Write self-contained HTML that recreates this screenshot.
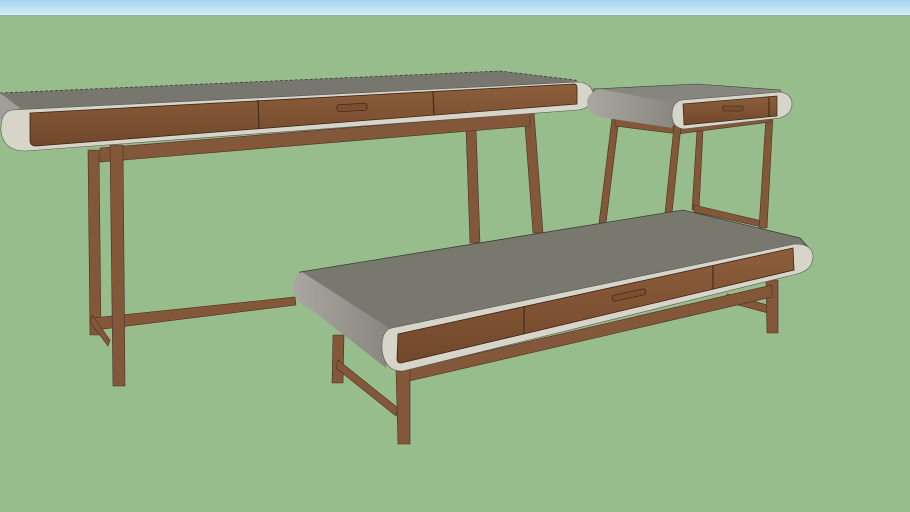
<!DOCTYPE html>
<html><head><style>html,body{margin:0;padding:0;width:910px;height:512px;overflow:hidden;background:#98bd8c}</style></head>
<body>
<svg width="910" height="512" viewBox="0 0 910 512" xmlns="http://www.w3.org/2000/svg">
<defs>
<linearGradient id="sky" x1="0" y1="0" x2="0" y2="1"><stop offset="0" stop-color="#a6d4ee"/><stop offset="1" stop-color="#d4ecf6"/></linearGradient>
<linearGradient id="wood" x1="0" y1="0" x2="0" y2="1"><stop offset="0" stop-color="#8c5e3c"/><stop offset=".5" stop-color="#7f5333"/><stop offset="1" stop-color="#72482b"/></linearGradient>
<linearGradient id="cap" x1="0" y1="0" x2="1" y2="0"><stop offset="0" stop-color="#a9a79f"/><stop offset="1" stop-color="#86857e"/></linearGradient>
</defs>
<rect x="0" y="0" width="910" height="15" fill="url(#sky)"/>
<rect x="0" y="15" width="910" height="1" fill="#8fb5a0"/>
<g stroke="#4a3020" stroke-width=".6" fill="#82573a">
<polygon points="88,150 99,150 101,335 90,335"/>
<polygon points="466,128 476,128 480,243 470,243"/>
<polygon points="524,112 534,112 543,233 533,233"/>
<polygon points="92,318 295,297 296,305 95,330"/>
<polygon points="92,315 110,340 108,346 90,322"/>
<polygon points="100,148 530,113 530,126 100,162"/>
<polygon points="110,145 123,145 125,386 113,386"/>
<polygon points="612,118 619,118 606,223 599,223"/>
<polygon points="697,130 703,130 699,210 692,210"/>
<polygon points="694,205 762,221 762,227 694,212"/>
<polygon points="766,116 773,116 767,228 759,228"/>
<polygon points="615,118 770,114 770,122 678,134 615,126"/>
<polygon points="674,126 681,126 672,213 665,213"/>
</g>
<polygon points="0,93 500,71 575,80 590,90 20,118 0,110" fill="#78776f" stroke="#3d3d38" stroke-width=".8" stroke-dasharray="3,2"/>
<path d="M0,93 L20,108 L10,118 L0,120Z" fill="#a09e96"/>
<path d="M12,110 L578,82 Q593,83 593,96 Q593,108 578,110 L25,151 Q4,151 1,132 Q0,112 12,110Z" fill="#d7d5ca" stroke="#555" stroke-width=".6"/>
<path d="M30,113 L574,84 Q577,84 577,88 L577,104 L36,146 Q30,146 30,140Z" fill="url(#wood)" stroke="#3a2515" stroke-width=".8"/>
<line x1="258" y1="100" x2="259" y2="128" stroke="#3a2515"/>
<line x1="433" y1="92" x2="434" y2="115" stroke="#3a2515"/>
<rect x="337" y="104" width="30" height="7" rx="2" fill="#7a4e2f" stroke="#3a2515" stroke-width=".7" transform="rotate(-3 352 108)"/>
<polygon points="593,89 697,84 780,90 785,98 680,104 600,116" fill="#86857e" stroke="#3d3d38" stroke-width=".6"/>
<path d="M600,89 Q588,92 587,102 Q588,114 600,117 L672,128 L680,104Z" fill="url(#cap)"/>
<path d="M682,100 L780,92 Q792,94 792,104 Q792,114 780,118 L684,129 Q672,128 672,115 Q672,102 682,100Z" fill="#d7d5ca" stroke="#555" stroke-width=".6"/>
<path d="M683,104 L777,96 L777,116 L684,125Z" fill="url(#wood)" stroke="#3a2515" stroke-width=".7"/>
<line x1="769" y1="97" x2="769" y2="117" stroke="#3a2515"/>
<rect x="723" y="106" width="20" height="5" rx="1.5" fill="#7a4e2f" stroke="#3a2515" stroke-width=".6"/>
<g stroke="#4a3020" stroke-width=".6" fill="#82573a">
<polygon points="333,335 344,335 343,383 332,383"/>
<polygon points="338,360 398,408 396,416 336,368"/>
<polygon points="727,294 768,305 768,313 727,302"/>
<polygon points="766,280 778,280 778,333 767,333"/>
<polygon points="405,370 772,285 772,297 405,382"/>
<polygon points="396,368 410,368 410,444 398,444"/>
</g>
<polygon points="300,272 683,210 800,238 808,247 390,330 300,300" fill="#79786f" stroke="#3d3d38" stroke-width=".8"/>
<path d="M302,272 Q290,278 293,292 Q296,303 312,310 L386,368 L392,330 Z" fill="url(#cap)"/>
<path d="M392,328 L795,244 Q812,244 813,256 Q813,270 797,274 L403,371 Q385,372 382,350 Q381,330 392,328Z" fill="#d7d5ca" stroke="#555" stroke-width=".6"/>
<path d="M398,334 L793,248 L794,270 L401,363 Q397,363 397,359Z" fill="url(#wood)" stroke="#3a2515" stroke-width=".8"/>
<line x1="524" y1="306" x2="524" y2="334" stroke="#3a2515"/>
<line x1="713" y1="266" x2="713" y2="289" stroke="#3a2515"/>
<rect x="612" y="292" width="34" height="6" rx="2" fill="#7a4e2f" stroke="#3a2515" stroke-width=".7" transform="rotate(-12 629 295)"/>
</svg>
</body></html>
